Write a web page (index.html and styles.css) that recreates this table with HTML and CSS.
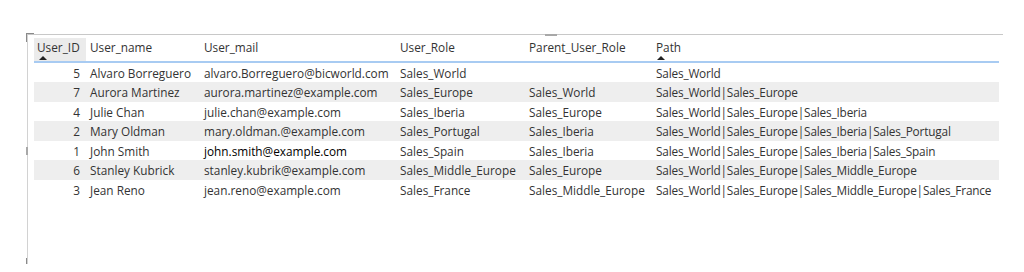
FILE: index.html
```html
<!DOCTYPE html>
<html lang="en">
<head>
<meta charset="utf-8">
<title>Users</title>
<link rel="stylesheet" href="styles.css">
</head>
<body>
<div class="visual">
  <span class="corner corner-tl"></span>
  <span class="corner corner-bl"></span>
  <span class="handle handle-top"></span>
  <span class="handle handle-bottom"></span>
  <span class="handle handle-left"></span>
  <table class="grid">
    <colgroup>
      <col class="c-id"><col class="c-name"><col class="c-mail"><col class="c-role"><col class="c-parent"><col class="c-path">
    </colgroup>
    <thead>
      <tr>
        <th class="h-id sorted">User_ID<span class="arrow"></span></th>
        <th>User_name</th>
        <th>User_mail</th>
        <th>User_Role</th>
        <th>Parent_User_Role</th>
        <th>Path<span class="arrow"></span></th>
      </tr>
    </thead>
    <tbody>
      <tr><td class="num">5</td><td>Alvaro Borreguero</td><td>alvaro.Borreguero@bicworld.com</td><td>Sales_World</td><td></td><td class="path">Sales_World</td></tr>
      <tr class="alt"><td class="num">7</td><td>Aurora Martinez</td><td>aurora.martinez@example.com</td><td>Sales_Europe</td><td>Sales_World</td><td class="path">Sales_World|Sales_Europe</td></tr>
      <tr><td class="num">4</td><td>Julie Chan</td><td>julie.chan@example.com</td><td>Sales_Iberia</td><td>Sales_Europe</td><td class="path">Sales_World|Sales_Europe|Sales_Iberia</td></tr>
      <tr class="alt"><td class="num">2</td><td>Mary Oldman</td><td>mary.oldman.@example.com</td><td>Sales_Portugal</td><td>Sales_Iberia</td><td class="path">Sales_World|Sales_Europe|Sales_Iberia|Sales_Portugal</td></tr>
      <tr><td class="num">1</td><td>John Smith</td><td class="strong">john.smith@example.com</td><td>Sales_Spain</td><td>Sales_Iberia</td><td class="path">Sales_World|Sales_Europe|Sales_Iberia|Sales_Spain</td></tr>
      <tr class="alt"><td class="num">6</td><td>Stanley Kubrick</td><td>stanley.kubrik@example.com</td><td>Sales_Middle_Europe</td><td>Sales_Europe</td><td class="path">Sales_World|Sales_Europe|Sales_Middle_Europe</td></tr>
      <tr><td class="num">3</td><td>Jean Reno</td><td>jean.reno@example.com</td><td>Sales_France</td><td>Sales_Middle_Europe</td><td class="path">Sales_World|Sales_Europe|Sales_Middle_Europe|Sales_France</td></tr>
    </tbody>
  </table>
</div>
</body>
</html>
```
FILE: styles.css
```css
html, body {
  margin: 0;
  padding: 0;
  background: #ffffff;
}

body {
  font-family: "Open Sans", "Noto Sans", "Liberation Sans", sans-serif;
  font-size: 11.8px;
  color: #333333;
}

.visual {
  position: relative;
  box-sizing: border-box;
  margin: 34px 0 0 27px;
  width: 976px;
  height: 230px;
  border-top: 1px solid #c8c8c8;
  border-left: 1px solid #d2d2d2;
  padding: 3px 0 0 6px;
}

.corner {
  position: absolute;
  border-color: #8a8a8a;
  border-style: solid;
  width: 7px;
  height: 8px;
}

.corner-tl {
  left: -2px;
  top: -2px;
  border-width: 1px 0 0 1px;
}

.corner-bl {
  left: -2px;
  top: 223px;
  border-width: 0 0 2px 1px;
}

.handle {
  position: absolute;
  background: #a8a8a8;
}

.handle-top {
  left: 517px;
  top: -1px;
  width: 12px;
  height: 2px;
}

.handle-bottom {
  left: 516px;
  top: 229px;
  width: 13px;
  height: 2px;
}

.handle-left {
  left: -2px;
  top: 112px;
  width: 2px;
  height: 8px;
}

.grid {
  border-collapse: collapse;
  table-layout: fixed;
  width: 965px;
}

.c-id { width: 52px; }
.c-name { width: 114px; }
.c-mail { width: 196px; }
.c-role { width: 129px; }
.c-parent { width: 127px; }
.c-path { width: 347px; }

.grid th {
  position: relative;
  height: 24px;
  padding: 1px 0 0 4px;
  box-sizing: border-box;
  vertical-align: top;
  text-align: left;
  font-weight: normal;
  color: #333333;
  border-bottom: 2px solid #a8cbf2;
  white-space: nowrap;
}

.grid th.h-id {
  padding-left: 3px;
}

.grid th.sorted {
  background: #ebebeb;
}

.arrow {
  position: absolute;
  left: 5px;
  top: 18px;
  width: 0;
  height: 0;
  border-left: 4px solid transparent;
  border-right: 4px solid transparent;
  border-bottom: 4px solid #222222;
}

.grid td {
  height: 19.5px;
  padding: 1px 0 0 4px;
  box-sizing: border-box;
  vertical-align: middle;
  white-space: nowrap;
  line-height: 18px;
}

.grid td.path {
  letter-spacing: -0.17px;
}

.grid td.num {
  text-align: right;
  padding: 1px 6px 0 0;
}

.grid tr.alt td {
  background: #eeeeee;
}

.grid td.strong {
  color: #000000;
}
```
